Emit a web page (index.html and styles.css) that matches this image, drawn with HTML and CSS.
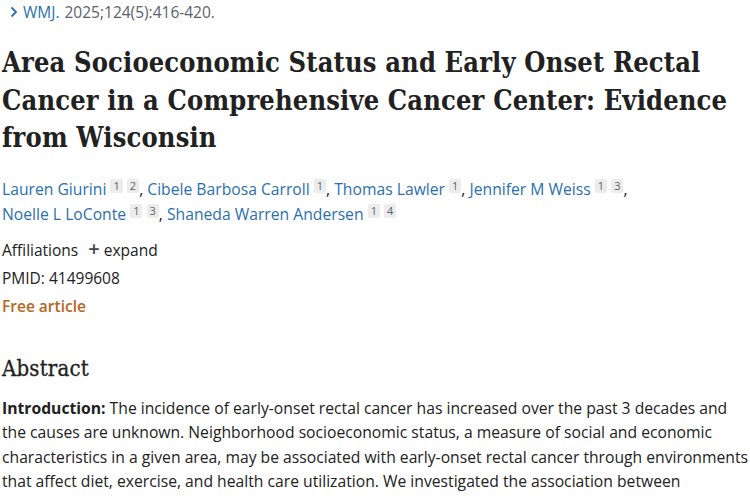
FILE: index.html
```html
<!DOCTYPE html>
<html lang="en">
<head>
<meta charset="utf-8">
<link rel="stylesheet" href="styles.css">
</head>
<body>
<main class="article">
  <div class="cit">
    <svg class="chev" width="8" height="12" viewBox="0 0 8 12"><path d="M1.5 1.5 L6 6 L1.5 10.5" fill="none" stroke="#2a6fb0" stroke-width="1.8"/></svg>
    <a class="link journal">WMJ.</a> <span class="cit-text">2025;124(5):416-420.</span>
  </div>
  <h1 class="title">Area Socioeconomic Status and Early Onset Rectal Cancer in a Comprehensive Cancer Center: Evidence from Wisconsin</h1>
  <div class="authors">
    <a class="link">Lauren Giurini</a> <sup class="aff">1</sup> <sup class="aff">2</sup>, <a class="link">Cibele Barbosa Carroll</a> <sup class="aff">1</sup>, <a class="link">Thomas Lawler</a> <sup class="aff">1</sup>, <a class="link">Jennifer M Weiss</a> <sup class="aff">1</sup> <sup class="aff">3</sup>,<br>
    <a class="link">Noelle L LoConte</a> <sup class="aff">1</sup> <sup class="aff">3</sup>, <a class="link">Shaneda Warren Andersen</a> <sup class="aff">1</sup> <sup class="aff">4</sup>
  </div>
  <div class="meta">
    <div class="row">Affiliations <span class="expand"><span class="plus">+</span> expand</span></div>
    <div class="row">PMID: 41499608</div>
    <div class="row free">Free article</div>
  </div>
  <h2 class="abs-title">Abstract</h2>
  <p class="abs"><strong>Introduction:</strong> The incidence of early-onset rectal cancer has increased over the past 3 decades and the causes are unknown. Neighborhood socioeconomic status, a measure of social and economic characteristics in a given area, may be associated with early-onset rectal cancer through environments that affect diet, exercise, and health care utilization. We investigated the association between neighborhood socioeconomic status and early-onset rectal cancer.</p>
</main>
</body>
</html>
```
FILE: styles.css
```css
html, body { margin: 0; padding: 0; background: #fff; }
body {
  font-family: "Open Sans", "Noto Sans", sans-serif;
  color: #212121;
  font-size: 16px;
  width: 750px;
  height: 500px;
  overflow: hidden;
}
.article { padding: 0 0 0 2px; }
.cit {
  display: flex;
  align-items: center;
  height: 24px;
  font-size: 15.5px;
  color: #5b616b;
  padding-left: 8px;
  gap: 5px;
}
.link { color: #2a6fb0; text-decoration: none; }
.title {
  font-family: "DejaVu Serif", serif;
  font-stretch: condensed;
  font-weight: bold;
  font-size: 27px;
  line-height: 37.5px;
  margin: 20px 0 0 0;
  color: #212121;
  letter-spacing: 0.15px;
  width: 740px;
}
.authors {
  margin-top: 20px;
  font-size: 15.7px;
  line-height: 25px;
  color: #212121;
}
.aff {
  display: inline-block;
  font-size: 11px;
  line-height: 14px;
  background: #ececec;
  color: #5b616b;
  padding: 0 3px;
  vertical-align: 5px;
  border-radius: 2px;
}
.meta { margin-top: 9px; font-size: 15.5px; }
.row { line-height: 28px; }
.expand { margin-left: 6px; }
.plus { font-size: 20px; font-weight: 600; color: #444; line-height: 1; }
.free { color: #b8661e; font-weight: 600; }
.abs-title {
  font-family: "DejaVu Serif", serif;
  font-stretch: condensed;
  font-weight: normal;
  font-size: 22px;
  margin: 34px 0 0 0;
  line-height: 30px;
  letter-spacing: 0.2px;
  -webkit-text-stroke: 0.3px #212121;
}
.abs {
  margin: 12px 0 0 0;
  font-size: 15.7px;
  line-height: 24.5px;
}
.abs strong { font-weight: 700; }
```
